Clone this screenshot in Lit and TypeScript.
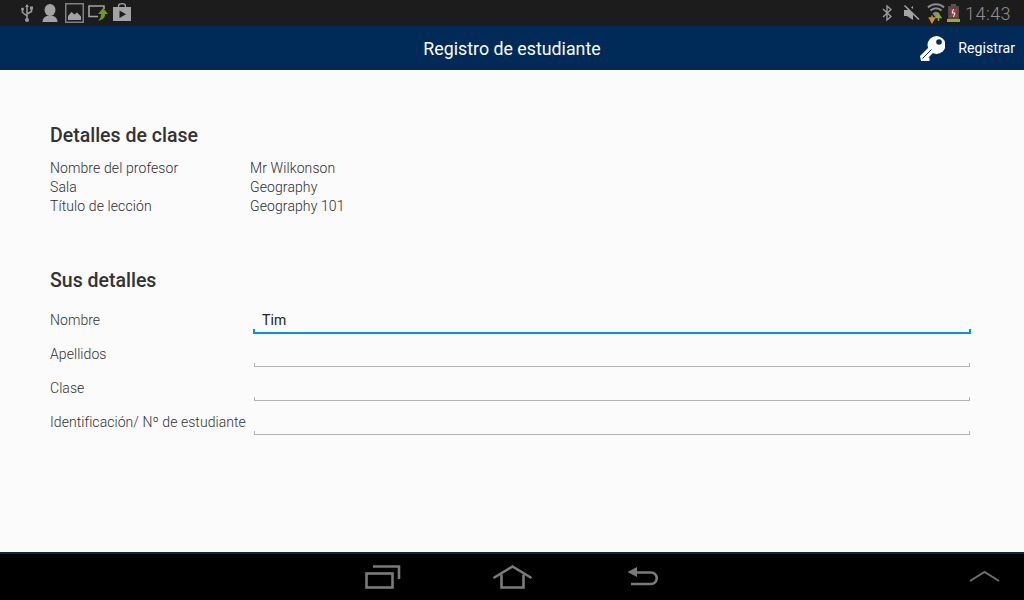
import { LitElement, html, css, svg } from "lit";
import { customElement } from "lit/decorators.js";

@customElement("app-root")
export class AppRoot extends LitElement {
  static styles = css`
    :host { display: flex; flex-direction: column; width: 1024px; height: 600px; overflow: hidden; font-family: Roboto, sans-serif; background: #fbfbfb; color: #333; }
    svg { display: block; }
    .status { height: 26px; flex: none; background: #1c1c1c; display: flex; align-items: center; justify-content: space-between; padding: 0 13px 0 19px; }
    .group { display: flex; align-items: center; }
    .clock { color: #8f8f8f; font-size: 18px; font-weight: 300; letter-spacing: 0.45px; margin-left: 5px; }
    .appbar { height: 44px; flex: none; background: #002b59; color: #fff; display: grid; grid-template-columns: 1fr auto 1fr; align-items: center; }
    .title { font-size: 17.8px; grid-column: 2; }
    .action { grid-column: 3; justify-self: end; display: flex; align-items: center; padding-right: 9px; font-size: 14.2px; gap: 13px; }
    .content { flex: 1; padding: 54px 54px 0 50px; background: #fbfbfb; }
    h2 { margin: 0; font-size: 19.5px; line-height: 24px; font-weight: 500; color: #333; }
    .info { display: grid; grid-template-columns: 200px 1fr; margin-top: 11px; margin-bottom: 53px; font-size: 14px; font-weight: 300; line-height: 19px; letter-spacing: 0.1px; color: #2e2e2e; }
    .form { display: grid; grid-template-columns: 204px 1fr; margin-top: 10px; font-size: 14px; font-weight: 300; letter-spacing: 0.06px; color: #333; }
    .label { height: 34px; line-height: 34px; white-space: nowrap; }
    .field { height: 34px; position: relative; padding-left: 8px; line-height: 34px; color: #222; font-weight: 400; }
    .line { position: absolute; left: 0; right: 0; bottom: 4px; height: 1px; background: #b3b3b3; }
    .tick { position: absolute; bottom: 4px; width: 1px; height: 4px; background: #b3b3b3; }
    .tick.l { left: 0; }
    .tick.r { right: 0; }
    .on .line { height: 2px; bottom: 3px; left: -1px; right: -1px; background: #0099cc; }
    .on .tick { background: #0099cc; width: 2px; height: 5px; bottom: 3px; }
    .on .tick.l { left: -1px; }
    .on .tick.r { right: -1px; }
    .accent { height: 2px; flex: none; background: #06293f; }
    .nav { height: 46px; flex: none; background: #000; position: relative; }
    .btn { position: absolute; }
    .usb { margin-right: 6px; }
    .person { margin-right: 6px; }
    .image { margin-right: 4px; }
    .upload { margin-right: 4px; }
    .bt { margin-right: 7px; }
    .mute { margin-right: 6px; }
    .wifi { margin-right: 2px; }
    .recents { left: 364px; top: 10px; }
    .home { left: 492px; top: 10px; }
    .back { left: 626px; top: 10px; }
    .up { left: 969px; top: 15px; }
  `;

  private statusLeft() {
    return html`
      <svg class="usb" width="16" height="20" viewBox="0 0 16 20" fill="none" stroke="#9a9a9a" stroke-width="1.5">
        <path d="M8 2v16M3.500 6.500v3l4.500 3.500M12.500 5.500v3L8 11"/>
        <circle cx="8" cy="17" r="2" fill="#9a9a9a" stroke="none"/>
        <circle cx="3.500" cy="6" r="1.500" fill="#9a9a9a" stroke="none"/>
        <rect x="11" y="3.500" width="3" height="3" fill="#9a9a9a" stroke="none"/>
        <path d="M6 4l2-3 2 3z" fill="#9a9a9a" stroke="none"/>
      </svg>
      <svg class="person" width="18" height="20" viewBox="0 0 18 20" fill="#a3a3a3">
        <ellipse cx="9" cy="7" rx="5.500" ry="6"/>
        <path d="M1.500 19c0-4 3-6.500 7.500-6.500s7.500 2.500 7.500 6.500z"/>
      </svg>
      <svg class="image" width="19" height="20" viewBox="0 0 19 20">
        <rect x="0.750" y="0.750" width="17.500" height="18.500" fill="none" stroke="#808080" stroke-width="1.500"/>
        <path d="M3 17v-4l3.500-4 3 2.500 2.500-2 4 4V17z" fill="#a3a3a3"/>
      </svg>
      <svg class="upload" width="21" height="20" viewBox="0 0 21 20">
        <path d="M10 13.500H1V3h15v3" fill="none" stroke="#a3a3a3" stroke-width="1.600"/>
        <path d="M15 5l5 6h-3v1c0 3-3 5-7 6 2-2 3-4 3-6v-1h-3z" fill="#6c9a16"/>
      </svg>
      <svg width="18" height="20" viewBox="0 0 18 20">
        <path d="M5.500 5V3C5.500 1 7 .7 9 .7s3.500.3 3.500 2.300v2" fill="none" stroke="#a3a3a3" stroke-width="1.300"/>
        <path d="M0 4h18v14H0z" fill="#a3a3a3"/>
        <path d="M6.500 7.500v7.500l6.500-3.750z" fill="#1c1c1c"/>
      </svg>`;
  }

  private statusRight() {
    return html`
      <svg class="bt" width="14" height="18" viewBox="0 0 14 18" fill="none" stroke="#9a9a9a" stroke-width="1.400">
        <path d="M3 5l8 7.500-4 3.500V2l4 3.500L3 13"/>
      </svg>
      <svg class="mute" width="20" height="18" viewBox="0 0 20 18">
        <path d="M3 6h3l6-4v14l-6-4H3z" fill="#a3a3a3"/>
        <path d="M5 1l15 14" stroke="#1c1c1c" stroke-width="3.500"/>
        <path d="M3.500 1.500l14.500 14" stroke="#a3a3a3" stroke-width="1.600"/>
      </svg>
      <svg class="wifi" width="18" height="22" viewBox="0 0 18 22" fill="none">
        <path d="M1 5.500C5 1 13 1 17 5.500" stroke="#8c8c8c" stroke-width="2"/>
        <path d="M3.500 8.500C6.500 5.500 11.500 5.500 14.500 8.500" stroke="#8c8c8c" stroke-width="2"/>
        <path d="M6 11.500C8 9.800 10 9.800 12 11.500L9 15z" fill="#8c8c8c" stroke="#8c8c8c"/>
        <path d="M5 13.500v3M2.500 16h5L5 20.500z" stroke="#e08a1a" stroke-width="1.500" fill="#e08a1a"/>
        <path d="M11.500 19v-3.500M9.200 15.500h4.600L11.500 12z" stroke="#7fb51c" stroke-width="1.500" fill="#7fb51c"/>
      </svg>
      <svg width="13" height="20" viewBox="0 0 13 20">
        <rect x="4" y="1" width="5" height="2" fill="#555"/>
        <rect x="1" y="3" width="11" height="13" fill="#4c4c4c"/>
        <rect x="0" y="16" width="13" height="3" fill="#86b81a"/>
        <path d="M3 6l7 8M10 6l-7 8" stroke="#e0262a" stroke-width="2"/>
        <path d="M6.500 6l-1.500 4h3l-1.500 4" stroke="#fff" stroke-width="1" fill="none"/>
      </svg>
      <span class="clock">14:43</span>`;
  }

  private key() {
    return svg`<svg width="26" height="27" viewBox="0 0 26 27">
      <circle cx="17.500" cy="10" r="9" fill="#fff"/>
      <path d="M11 11l5 5L6 26 2 26 1 21z" fill="#fff"/>
      <rect x="6" y="22.500" width="4.500" height="3.500" fill="#fff"/>
      <circle cx="20" cy="7" r="2.800" fill="#002b59"/>
      <path d="M3.500 23.500l9-9" stroke="#002b59" stroke-width="1"/>
    </svg>`;
  }

  private field(value = "", on = false) {
    return html`<div class="field ${on ? "on" : ""}">${value}<i class="line"></i><i class="tick l"></i><i class="tick r"></i></div>`;
  }

  render() {
    return html`
      <div class="status">
        <div class="group">${this.statusLeft()}</div>
        <div class="group">${this.statusRight()}</div>
      </div>
      <div class="appbar">
        <div class="title">Registro de estudiante</div>
        <div class="action">${this.key()}<span>Registrar</span></div>
      </div>
      <div class="content">
        <h2>Detalles de clase</h2>
        <div class="info">
          <span>Nombre del profesor</span><span>Mr Wilkonson</span>
          <span>Sala</span><span>Geography</span>
          <span>Título de lección</span><span>Geography 101</span>
        </div>
        <h2>Sus detalles</h2>
        <div class="form">
          <div class="label">Nombre</div>${this.field("Tim", true)}
          <div class="label">Apellidos</div>${this.field()}
          <div class="label">Clase</div>${this.field()}
          <div class="label">Identificación/ Nº de estudiante</div>${this.field()}
        </div>
      </div>
      <div class="accent"></div>
      <div class="nav">
        <svg class="btn recents" width="38" height="26" viewBox="0 0 38 26" fill="none" stroke="#7a7a7a" stroke-width="2.600">
          <rect x="2.500" y="9.500" width="26" height="14"/>
          <path d="M9 2.500h26V15"/>
        </svg>
        <svg class="btn home" width="42" height="26" viewBox="0 0 42 26" fill="none" stroke="#7a7a7a" stroke-width="2.600">
          <path d="M1.500 14L20.500 2.500 39.500 14"/>
          <path d="M9.500 10.500V23.500H31.500V10.500"/>
        </svg>
        <svg class="btn back" width="34" height="26" viewBox="0 0 34 26" fill="none" stroke="#7a7a7a" stroke-width="2.600">
          <path d="M8 8.500H25a5.750 5.750 0 0 1 0 11.500H5"/>
          <path d="M1.500 8L11 3v10z" fill="#7a7a7a" stroke="none"/>
        </svg>
        <svg class="btn up" width="32" height="14" viewBox="0 0 32 14" fill="none" stroke="#6e6e6e" stroke-width="2">
          <path d="M1 12L15.500 3 30 12"/>
        </svg>
      </div>
    `;
  }
}
